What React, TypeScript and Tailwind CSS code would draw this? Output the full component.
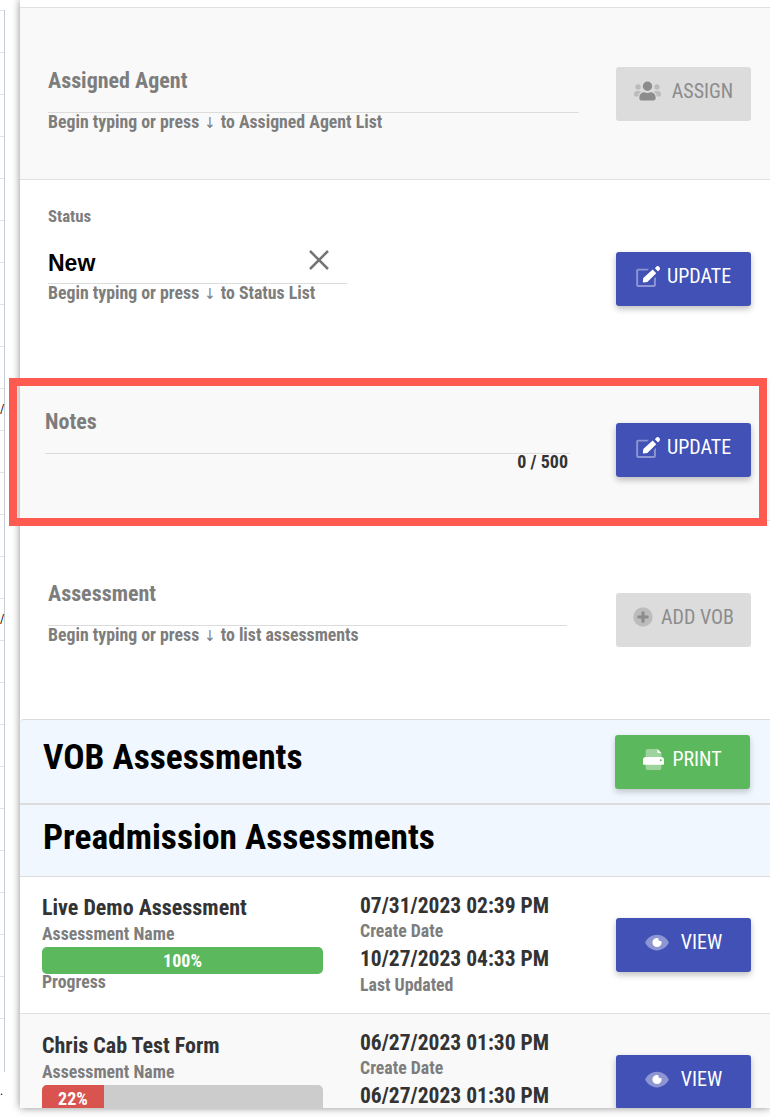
import type { ReactNode } from 'react';

const sans = 'font-[Roboto,"Liberation_Sans",sans-serif] font-stretch-[85%]';

// grid lines of the table that sits behind the drawer
const backdropRows = Array.from({ length: 25 }, (_, i) => i);

function UsersIcon() {
  return (
    <svg viewBox="0 0 640 512" className="w-[27px] h-[22px] fill-current">
      <path opacity=".4" d="M96 224a64 64 0 1 0 0-128 64 64 0 0 0 0 128zm448 0a64 64 0 1 0 0-128 64 64 0 0 0 0 128zm32 32h-64c-17.600 0-33.500 7.100-45.100 18.600 40.300 22.100 68.900 62 75.100 109.400h66c17.700 0 32-14.300 32-32v-32c0-35.300-28.700-64-64-64zm-448 0H64c-35.300 0-64 28.700-64 64v32c0 17.700 14.300 32 32 32h65.900c6.300-47.400 34.900-87.300 75.200-109.400C161.500 263.100 145.600 256 128 256z" />
      <path d="M320 256a112 112 0 1 0 0-224 112 112 0 0 0 0 224zm76.800 32h-8.300c-20.800 10-43.900 16-68.500 16s-47.600-6-68.500-16h-8.300C179.600 288 128 339.600 128 403.200V432c0 26.500 21.500 48 48 48h288c26.500 0 48-21.500 48-48v-28.800c0-63.600-51.600-115.200-115.200-115.200z" />
    </svg>
  );
}

function EditIcon() {
  return (
    <svg viewBox="0 0 576 512" className="w-[24px] h-[21px] fill-current">
      <path opacity=".4" d="M48 64h268l-48 48H64a16 16 0 0 0-16 16v320a16 16 0 0 0 16 16h352a16 16 0 0 0 16-16V308l48-48v204c0 26.500-21.500 48-48 48H48c-26.500 0-48-21.500-48-48V112c0-26.500 21.500-48 48-48z" />
      <path d="M402 87l87 87-217 217-88 10a19 19 0 0 1-21-21l10-88zM567 30l-21-21a32 32 0 0 0-45 0l-40 40a8 8 0 0 0 0 11l66 66a8 8 0 0 0 11 0l29-29c18-17 18-50 0-67z" />
    </svg>
  );
}

function PlusIcon() {
  return (
    <svg viewBox="0 0 512 512" className="w-[20px] h-[20px] fill-current">
      <path opacity=".4" d="M256 8a248 248 0 1 0 0 496 248 248 0 0 0 0-496z" />
      <path d="M400 284a12 12 0 0 1-12 12h-92v92a12 12 0 0 1-12 12h-56a12 12 0 0 1-12-12v-92h-92a12 12 0 0 1-12-12v-56a12 12 0 0 1 12-12h92v-92a12 12 0 0 1 12-12h56a12 12 0 0 1 12 12v92h92a12 12 0 0 1 12 12z" />
    </svg>
  );
}

function PrintIcon() {
  return (
    <svg viewBox="0 0 512 512" className="w-[21px] h-[21px] fill-current">
      <path opacity=".4" d="M64 192V48c0-26.500 21.500-48 48-48h240l96 96v96zm0 160h384v112c0 26.500-21.500 48-48 48H112c-26.500 0-48-21.500-48-48z" />
      <path d="M352 0l96 96h-96zM64 192h384c35.300 0 64 28.700 64 64v112c0 8.800-7.200 16-16 16H16c-8.800 0-16-7.200-16-16V256c0-35.300 28.700-64 64-64zm368 104a24 24 0 1 0 0-48 24 24 0 0 0 0 48z" />
    </svg>
  );
}

function EyeIcon() {
  return (
    <svg viewBox="0 0 576 512" className="w-[24px] h-[21px] fill-current">
      <path opacity=".4" d="M572.500 241.400C518.300 135.600 410.900 64 288 64S57.700 135.600 3.500 241.400a32.400 32.400 0 0 0 0 29.200C57.700 376.400 165.100 448 288 448s230.300-71.600 284.500-177.400a32.400 32.400 0 0 0 0-29.200z" />
      <path d="M288 144a112 112 0 1 0 112 112c0-12-2-24-6-35a56 56 0 0 1-71-71c-11-4-23-6-35-6z" />
    </svg>
  );
}

function ActionButton({ icon, label, tone, gap }: { icon: ReactNode; label: string; tone: 'blue' | 'green' | 'off'; gap: string }) {
  const toneClass =
    tone === 'blue'
      ? 'bg-[#4151b5] text-white shadow-[0_3px_6px_rgba(0,0,0,0.25)]'
      : tone === 'green'
        ? 'bg-[#5cb85c] text-white shadow-[0_3px_6px_rgba(0,0,0,0.2)]'
        : 'bg-[#dcdcdc] text-[#8c8c8c]';
  return (
    <div className={`w-[135px] h-[54px] shrink-0 rounded-[3px] flex items-center justify-center pb-[6px] text-[20px] leading-none ${gap} ${toneClass}`}>
      {icon}
      <span>{label}</span>
    </div>
  );
}

function Arrow() {
  return <span className="font-['DejaVu_Sans'] font-normal text-[15px] text-[#7d7d7d] mx-[1px]">↓</span>;
}

function Helper({ children }: { children: ReactNode }) {
  return <div className="text-[17.800px] leading-[18px] font-bold text-[#7d7d7d]">{children}</div>;
}

function FieldLabel({ children }: { children: ReactNode }) {
  return <div className="h-[45px] pt-[1px] border-b border-[#dcdcdc] text-[22px] leading-[24px] font-bold text-[#7d7d7d]">{children}</div>;
}

function Heading({ children, className = '' }: { children: ReactNode; className?: string }) {
  return <h2 className={`text-[35.400px] leading-[38px] font-bold text-black ${className}`}>{children}</h2>;
}

function AssessmentRow({ name, percent, barColor, created, updated, partial }: { name: string; percent: number; barColor: string; created: string; updated: string; partial?: boolean }) {
  return (
    <div className={`flex shrink-0 h-[137px] pl-[22px] border-b border-[#e0e0e0] ${partial ? 'bg-[#f9f9f9]' : 'bg-white'}`}>
      <div className={`w-[281px] shrink-0 ${partial ? 'pt-[20px]' : 'pt-[19px]'}`}>
        <div className="text-[22px] leading-[24px] font-bold text-[#333]">{name}</div>
        <div className="mt-[5px] text-[17.800px] leading-[18px] font-bold text-[#7d7d7d]">Assessment Name</div>
        <div className="mt-[4px] h-[27px] rounded-[5px] bg-[#cccccc] overflow-hidden">
          <div className={`h-full flex items-center justify-center text-[18px] font-bold text-white ${barColor}`} style={{ width: `${percent}%` }}>
            {percent}%
          </div>
        </div>
        {/* the drawer cuts off the second row, so its lower labels are not on screen */}
        {!partial && <div className="text-[17.800px] leading-[16px] font-bold text-[#7d7d7d]">Progress</div>}
      </div>
      <div className="ml-[37px] w-[256px] shrink-0 pt-[17px]">
        <div className="text-[21.500px] leading-[24px] font-bold text-[#333]">{created}</div>
        <div className="mt-[4px] text-[17.800px] leading-[18px] font-bold text-[#7d7d7d]">Create Date</div>
        <div className="mt-[7px] text-[21.500px] leading-[24px] font-bold text-[#333]">{updated}</div>
        {!partial && <div className="mt-[5px] text-[17.800px] leading-[18px] font-bold text-[#7d7d7d]">Last Updated</div>}
      </div>
      <div className="pt-[41px]">
        <ActionButton icon={<EyeIcon />} label="VIEW" tone="blue" gap="gap-[12px]" />
      </div>
    </div>
  );
}

export default function App() {
  return (
    <div className={`relative h-[1118px] w-[770px] overflow-hidden bg-white flex ${sans}`}>
      {/* table behind the drawer */}
      <div className="w-[20px] shrink-0 h-[1072px] pt-[10px] relative">
        <div className="w-[5px] h-full border-r border-[#c5ccd4] overflow-hidden">
          {backdropRows.map((i) => (
            <div key={i} className="h-[42px] border-t border-[#dfe3e8]" />
          ))}
        </div>
        <span className="absolute left-0 top-[402px] text-[12px] leading-[14px] text-black">/</span>
        <span className="absolute left-0 top-[612px] text-[12px] leading-[14px] text-black">/</span>
        <span className="absolute left-0 top-[1084px] text-[12px] leading-[14px] text-black">.</span>
      </div>

      {/* drawer */}
      <div className="w-[750px] h-[1108px] overflow-hidden flex flex-col bg-white shadow-[0_0_8px_rgba(0,0,0,0.45)]">
        <div className="h-[8px] shrink-0 border-b border-[#e0e0e0]" />

        <div className="h-[172px] shrink-0 flex pl-[28px] bg-[#f9f9f9] border-b border-[#e0e0e0]">
          <div className="w-[531px] pt-[60px]">
            <FieldLabel>Assigned Agent</FieldLabel>
            <Helper>Begin typing or press <Arrow /> to Assigned Agent List</Helper>
          </div>
          <div className="ml-[37px] pt-[59px]">
            <ActionButton icon={<UsersIcon />} label="ASSIGN" tone="off" gap="gap-[11px]" />
          </div>
        </div>

        <div className="h-[200px] shrink-0 flex pl-[28px] bg-white">
          <div className="w-[299px] pt-[27px]">
            <div className="text-[16.800px] leading-[18px] font-bold text-[#7d7d7d]">Status</div>
            <div className="mt-[17px] h-[42px] flex items-start justify-between border-b border-[#dcdcdc] pr-[18px] pt-[8px]">
              <span className="font-['Liberation_Sans'] font-stretch-normal text-[23px] leading-[26px] font-bold text-black">New</span>
              <svg viewBox="0 0 20 20" className="w-[20px] h-[20px] stroke-[#757575] stroke-[2.500] fill-none">
                <path d="M1 1l18 18M19 1L1 19" />
              </svg>
            </div>
            <Helper>Begin typing or press <Arrow /> to Status List</Helper>
          </div>
          <div className="ml-[269px] pt-[72px]">
            <ActionButton icon={<EditIcon />} label="UPDATE" tone="blue" gap="gap-[7px]" />
          </div>
        </div>

        <div className="h-[141px] shrink-0 flex pl-[25px] bg-[#f9f9f9] border-b border-[#e0e0e0]">
          <div className="w-[525px] pt-[29px]">
            <FieldLabel>Notes</FieldLabel>
            <div className="mt-[-1px] pr-[2px] text-right text-[18px] leading-[18px] font-bold text-[#333]">0 / 500</div>
          </div>
          <div className="ml-[46px] pt-[43px]">
            <ActionButton icon={<EditIcon />} label="UPDATE" tone="blue" gap="gap-[7px]" />
          </div>
        </div>

        <div className="h-[198px] shrink-0 flex pl-[28px] bg-white">
          <div className="w-[519px] pt-[60px]">
            <FieldLabel>Assessment</FieldLabel>
            <Helper>Begin typing or press <Arrow /> to list assessments</Helper>
          </div>
          <div className="ml-[49px] pt-[72px]">
            <ActionButton icon={<PlusIcon />} label="ADD VOB" tone="off" gap="gap-[8px]" />
          </div>
        </div>

        <div className="h-[86px] shrink-0 flex justify-between pl-[23px] pr-[20px] pt-[15px] bg-[#f0f7fe] border-t border-b-2 border-[#dcdcdc] rounded-tl-[4px]">
          <Heading className="pt-[3px]">VOB Assessments</Heading>
          <ActionButton icon={<PrintIcon />} label="PRINT" tone="green" gap="gap-[8px]" />
        </div>

        <div className="h-[72px] shrink-0 pl-[23px] pt-[13px] bg-[#f0f7fe] border-b border-[#dcdcdc]">
          <Heading>Preadmission Assessments</Heading>
        </div>

        <AssessmentRow name="Live Demo Assessment" percent={100} barColor="bg-[#5cb85c]" created="07/31/2023 02:39 PM" updated="10/27/2023 04:33 PM" />
        <AssessmentRow name="Chris Cab Test Form" percent={22} barColor="bg-[#d9534f]" created="06/27/2023 01:30 PM" updated="06/27/2023 01:30 PM" partial />
      </div>

      {/* red annotation drawn on top of the screenshot */}
      <div className="absolute left-[9px] top-[378px] w-[758px] h-[148px] border-[8px] border-[#ff5a4f]" />
    </div>
  );
}
